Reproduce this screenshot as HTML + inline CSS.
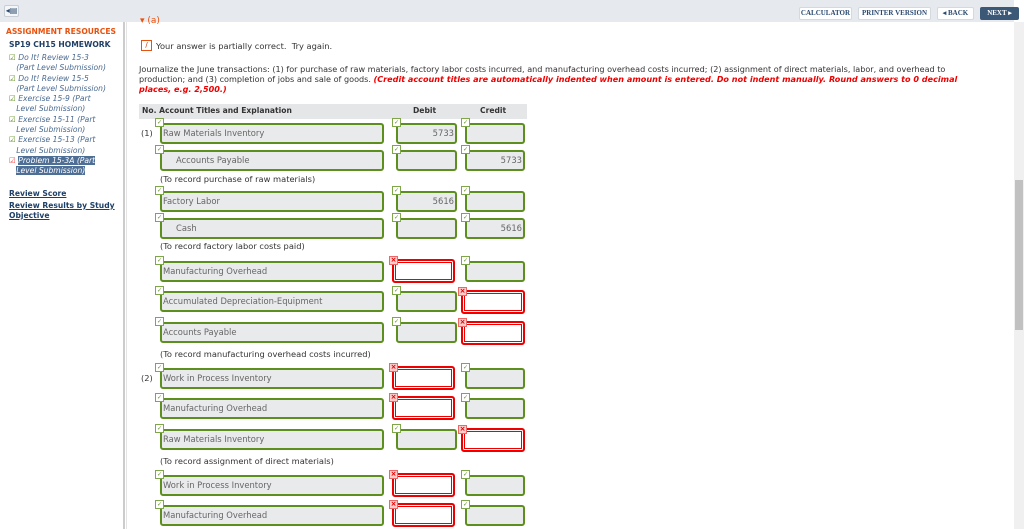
<!DOCTYPE html>
<html><head><meta charset="utf-8"><style>
*{margin:0;padding:0;box-sizing:border-box}
body{width:1024px;height:529px;overflow:hidden;background:#fff;font-family:Verdana,"DejaVu Sans","Liberation Sans",sans-serif;position:relative;color:#333}
.a{position:absolute}
.top{left:0;top:0;width:1014px;height:22px;background:#e6e9ed}
.btn{position:absolute;top:7px;height:13px;border:1px solid #d4d9df;background:#fff;border-radius:2px;font-family:"Liberation Serif",serif;font-weight:bold;font-size:7px;color:#2a4a70;text-align:center;line-height:11px}
.side{font-size:7.6px}
.g{position:absolute;border:2px solid #5d8f1e;background:#e9eaec;border-radius:3px;font-size:8.4px;color:#666;line-height:17px;padding:0 1px}
.r{position:absolute;border:2px solid #e00;background:#fff;border-radius:3px;box-shadow:inset 0 0 0 1px #fff,inset 0 0 0 2px #e00}
.ic{position:absolute;width:9px;height:9px;border:1px solid #7ea74a;background:#fff;font-size:6px;color:#5d8f1e;line-height:7px;text-align:center}
.ix{position:absolute;width:9px;height:9px;border:1px solid #e66;background:#fcc;font-size:7px;color:#d00;line-height:7px;text-align:center;font-weight:bold}
.t{position:absolute;font-size:8.3px;color:#333}
</style></head><body>
<div class="a top"></div>
<div class="a" style="left:4px;top:5px;width:15px;height:12px;border:1px solid #c8ced6;background:#f4f6f8;border-radius:2px;font-size:8px;color:#2a4a70;line-height:10px;text-align:center">◂▤</div>
<div class="btn" style="left:799px;width:53px">CALCULATOR</div>
<div class="btn" style="left:858px;width:73px">PRINTER VERSION</div>
<div class="btn" style="left:937px;width:37px">◂ BACK</div>
<div class="btn" style="left:980px;width:39px;background:#3b5877;color:#fff;border-color:#3b5877">NEXT ▸</div>
<div class="a" style="left:1014px;top:22px;width:10px;height:507px;background:#f0f0f0"></div>
<div class="a" style="left:1015px;top:180px;width:8px;height:150px;background:#c1c1c1"></div>
<div class="a" style="left:123px;top:22px;width:2px;height:507px;background:#ccc"></div>
<div class="a" style="left:126px;top:22px;width:1px;height:507px;background:#e4e4e4"></div>

<div class="a side" style="left:6px;top:27px;color:#e8520f;font-weight:bold">ASSIGNMENT RESOURCES</div>
<div class="a side" style="left:9px;top:40px;color:#1f3f66;font-weight:bold">SP19 CH15 HOMEWORK</div>
<div class="a side" style="left:9px;top:53px;color:#4a6a90;font-style:italic;line-height:10.3px;width:114px">
<div><span style="color:#5d8f1e;font-style:normal">☑</span> Do It! Review 15-3<br>&nbsp;&nbsp;&nbsp;(Part Level Submission)</div>
<div><span style="color:#5d8f1e;font-style:normal">☑</span> Do It! Review 15-5<br>&nbsp;&nbsp;&nbsp;(Part Level Submission)</div>
<div><span style="color:#5d8f1e;font-style:normal">☑</span> Exercise 15-9 (Part<br>&nbsp;&nbsp;&nbsp;Level Submission)</div>
<div><span style="color:#5d8f1e;font-style:normal">☑</span> Exercise 15-11 (Part<br>&nbsp;&nbsp;&nbsp;Level Submission)</div>
<div><span style="color:#5d8f1e;font-style:normal">☑</span> Exercise 15-13 (Part<br>&nbsp;&nbsp;&nbsp;Level Submission)</div>
<div><span style="color:#e44;font-style:normal">☑</span> <span style="background:#4e6e96;color:#fff">Problem 15-3A (Part</span><br>&nbsp;&nbsp;&nbsp;<span style="background:#4e6e96;color:#fff">Level Submission)</span></div>
</div>
<div class="a side" style="left:9px;top:189px;color:#1f3f66;font-weight:bold;text-decoration:underline;line-height:10px">Review Score</div>
<div class="a side" style="left:9px;top:201px;color:#1f3f66;font-weight:bold;text-decoration:underline;line-height:9.5px">Review Results by Study<br>Objective</div>

<div class="a" style="left:140px;top:16px;font-size:9px;color:#e8520f">▾ (a)</div>
<div class="a" style="left:141px;top:40px;width:11px;height:11px;border:1px solid #e8520f;font-size:7px;color:#c30;text-align:center;line-height:9px">/</div>
<div class="t" style="left:156px;top:41px">Your answer is partially correct.&nbsp; Try again.</div>
<div class="t" style="left:139px;top:64px;line-height:10px;width:834px;font-size:8.1px">Journalize the June transactions: (1) for purchase of raw materials, factory labor costs incurred, and manufacturing overhead costs incurred; (2) assignment of direct materials, labor, and overhead to production; and (3) completion of jobs and sale of goods. <b style="color:#e00;font-style:italic">(Credit account titles are automatically indented when amount is entered. Do not indent manually. Round answers to 0 decimal places, e.g. 2,500.)</b></div>
<div class="a" style="left:139px;top:104px;width:388px;height:15px;background:#e5e6e8"></div>
<div class="t" style="left:142px;top:106px;font-weight:bold;font-size:7.6px">No. Account Titles and Explanation</div>
<div class="t" style="left:413px;top:106px;font-weight:bold;font-size:7.6px">Debit</div>
<div class="t" style="left:480px;top:106px;font-weight:bold;font-size:7.6px">Credit</div>

<div class="t" style="left:141px;top:128px">(1)</div>
<div class="g" style="left:160px;top:123px;width:224px;height:21px">Raw Materials Inventory</div><div class="ic" style="left:155px;top:118px">✓</div>
<div class="g" style="left:396px;top:123px;width:61px;height:21px;text-align:right">5733</div><div class="ic" style="left:392px;top:118px">✓</div>
<div class="g" style="left:465px;top:123px;width:60px;height:21px"></div><div class="ic" style="left:461px;top:118px">✓</div>

<div class="g" style="left:160px;top:150px;width:224px;height:21px;padding-left:14px">Accounts Payable</div><div class="ic" style="left:155px;top:145px">✓</div>
<div class="g" style="left:396px;top:150px;width:61px;height:21px"></div><div class="ic" style="left:392px;top:145px">✓</div>
<div class="g" style="left:465px;top:150px;width:60px;height:21px;text-align:right">5733</div><div class="ic" style="left:461px;top:145px">✓</div>
<div class="t" style="left:160px;top:174px">(To record purchase of raw materials)</div>

<div class="g" style="left:160px;top:191px;width:224px;height:21px">Factory Labor</div><div class="ic" style="left:155px;top:186px">✓</div>
<div class="g" style="left:396px;top:191px;width:61px;height:21px;text-align:right">5616</div><div class="ic" style="left:392px;top:186px">✓</div>
<div class="g" style="left:465px;top:191px;width:60px;height:21px"></div><div class="ic" style="left:461px;top:186px">✓</div>

<div class="g" style="left:160px;top:218px;width:224px;height:21px;padding-left:14px">Cash</div><div class="ic" style="left:155px;top:213px">✓</div>
<div class="g" style="left:396px;top:218px;width:61px;height:21px"></div><div class="ic" style="left:392px;top:213px">✓</div>
<div class="g" style="left:465px;top:218px;width:60px;height:21px;text-align:right">5616</div><div class="ic" style="left:461px;top:213px">✓</div>
<div class="t" style="left:160px;top:241px">(To record factory labor costs paid)</div>

<div class="g" style="left:160px;top:261px;width:224px;height:21px">Manufacturing Overhead</div><div class="ic" style="left:155px;top:256px">✓</div>
<div class="r" style="left:392px;top:259px;width:63px;height:24px"></div><div class="ix" style="left:389px;top:256px">×</div>
<div class="g" style="left:465px;top:261px;width:60px;height:21px"></div><div class="ic" style="left:461px;top:256px">✓</div>

<div class="g" style="left:160px;top:291px;width:224px;height:21px">Accumulated Depreciation-Equipment</div><div class="ic" style="left:155px;top:286px">✓</div>
<div class="g" style="left:396px;top:291px;width:61px;height:21px"></div><div class="ic" style="left:392px;top:286px">✓</div>
<div class="r" style="left:461px;top:290px;width:64px;height:24px"></div><div class="ix" style="left:458px;top:287px">×</div>

<div class="g" style="left:160px;top:322px;width:224px;height:21px">Accounts Payable</div><div class="ic" style="left:155px;top:317px">✓</div>
<div class="g" style="left:396px;top:322px;width:61px;height:21px"></div><div class="ic" style="left:392px;top:317px">✓</div>
<div class="r" style="left:461px;top:321px;width:64px;height:24px"></div><div class="ix" style="left:458px;top:318px">×</div>
<div class="t" style="left:160px;top:349px">(To record manufacturing overhead costs incurred)</div>

<div class="t" style="left:141px;top:373px">(2)</div>
<div class="g" style="left:160px;top:368px;width:224px;height:21px">Work in Process Inventory</div><div class="ic" style="left:155px;top:363px">✓</div>
<div class="r" style="left:392px;top:366px;width:63px;height:24px"></div><div class="ix" style="left:389px;top:363px">×</div>
<div class="g" style="left:465px;top:368px;width:60px;height:21px"></div><div class="ic" style="left:461px;top:363px">✓</div>

<div class="g" style="left:160px;top:398px;width:224px;height:21px">Manufacturing Overhead</div><div class="ic" style="left:155px;top:393px">✓</div>
<div class="r" style="left:392px;top:396px;width:63px;height:24px"></div><div class="ix" style="left:389px;top:393px">×</div>
<div class="g" style="left:465px;top:398px;width:60px;height:21px"></div><div class="ic" style="left:461px;top:393px">✓</div>

<div class="g" style="left:160px;top:429px;width:224px;height:21px">Raw Materials Inventory</div><div class="ic" style="left:155px;top:424px">✓</div>
<div class="g" style="left:396px;top:429px;width:61px;height:21px"></div><div class="ic" style="left:392px;top:424px">✓</div>
<div class="r" style="left:461px;top:428px;width:64px;height:24px"></div><div class="ix" style="left:458px;top:425px">×</div>
<div class="t" style="left:160px;top:456px">(To record assignment of direct materials)</div>

<div class="g" style="left:160px;top:475px;width:224px;height:21px">Work in Process Inventory</div><div class="ic" style="left:155px;top:470px">✓</div>
<div class="r" style="left:392px;top:473px;width:63px;height:24px"></div><div class="ix" style="left:389px;top:470px">×</div>
<div class="g" style="left:465px;top:475px;width:60px;height:21px"></div><div class="ic" style="left:461px;top:470px">✓</div>

<div class="g" style="left:160px;top:505px;width:224px;height:21px">Manufacturing Overhead</div><div class="ic" style="left:155px;top:500px">✓</div>
<div class="r" style="left:392px;top:503px;width:63px;height:24px"></div><div class="ix" style="left:389px;top:500px">×</div>
<div class="g" style="left:465px;top:505px;width:60px;height:21px"></div><div class="ic" style="left:461px;top:500px">✓</div>
</body></html>
